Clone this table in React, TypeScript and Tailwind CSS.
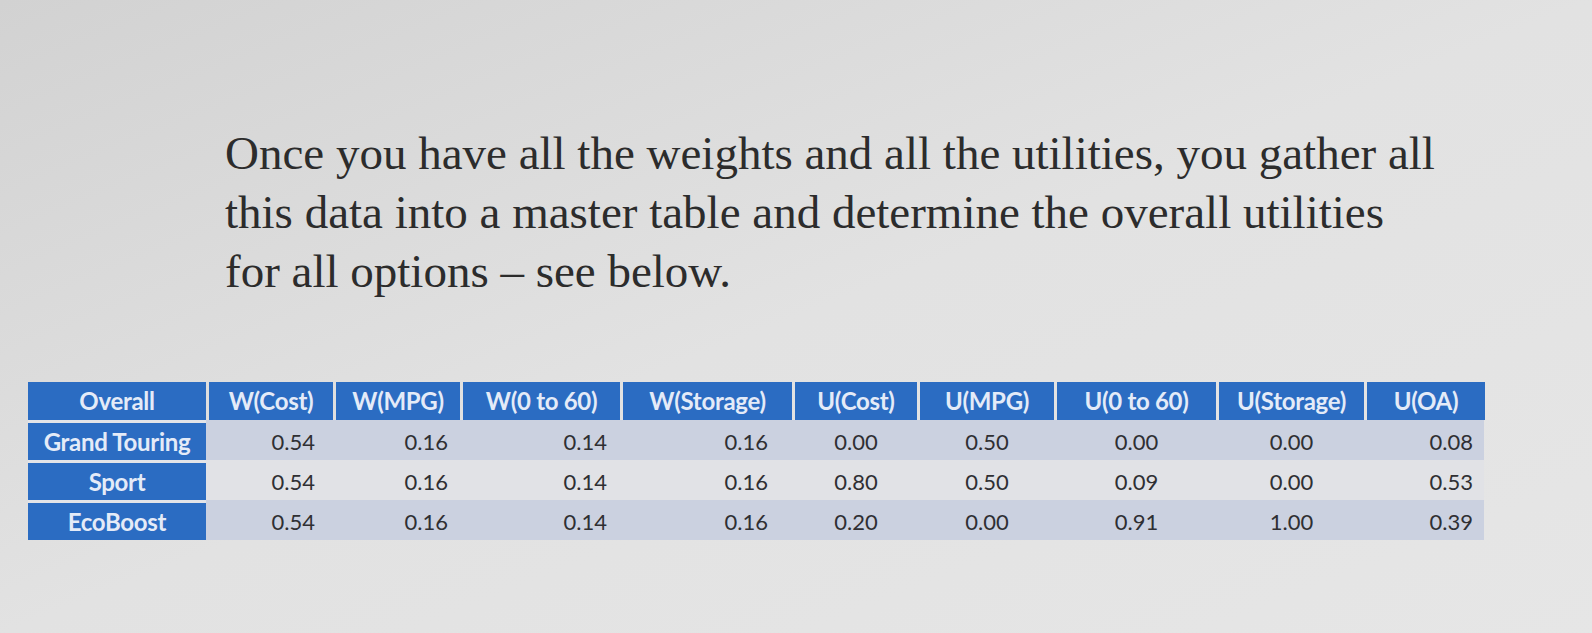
const columns = [
  { label: "Overall", align: "justify-center" },
  { label: "W(Cost)", align: "justify-end pr-[18px]" },
  { label: "W(MPG)", align: "justify-end pr-[12px]" },
  { label: "W(0 to 60)", align: "justify-end pr-[13px]" },
  { label: "W(Storage)", align: "justify-end pr-[24px]" },
  { label: "U(Cost)", align: "justify-center" },
  { label: "U(MPG)", align: "justify-center" },
  { label: "U(0 to 60)", align: "justify-center" },
  { label: "U(Storage)", align: "justify-center" },
  { label: "U(OA)", align: "justify-end pr-[12px]" },
];

const rows = [
  { name: "Grand Touring", values: ["0.54", "0.16", "0.14", "0.16", "0.00", "0.50", "0.00", "0.00", "0.08"], banded: true },
  { name: "Sport", values: ["0.54", "0.16", "0.14", "0.16", "0.80", "0.50", "0.09", "0.00", "0.53"], banded: false },
  { name: "EcoBoost", values: ["0.54", "0.16", "0.14", "0.16", "0.20", "0.00", "0.91", "1.00", "0.39"], banded: true },
];

const grid =
  "grid grid-cols-[178px_124px_124px_157px_169px_122px_134px_159px_145px_118px] gap-x-[3px]";

export default function App() {
  return (
    <div className="h-[633px] w-full overflow-hidden bg-gradient-to-br from-[#d2d2d2] via-[#e2e2e2] to-[#e6e6e6]">
      <div className="pl-[225px] pt-[124px] font-['Liberation_Serif',serif] text-[47px] leading-[59px] text-[#2c2c2c]">
        <p className="whitespace-nowrap">Once you have all the weights and all the utilities, you gather all</p>
        <p className="whitespace-nowrap">this data into a master table and determine the overall utilities</p>
        <p className="whitespace-nowrap">for all options – see below.</p>
      </div>

      <div className="ml-[28px] mt-[81px] w-[1456px] font-['Lato',sans-serif]">
        <div className={grid}>
          {columns.map((c) => (
            <div
              key={c.label}
              className="flex h-[38px] items-center justify-center bg-[#2b6cc2] text-[24px] font-bold tracking-[-0.3px] text-[#e4ebf8]"
            >
              {c.label}
            </div>
          ))}
        </div>

        {rows.map((r) => (
          <div
            key={r.name}
            className={`${grid} ${r.banded ? "bg-[#cbd1e0]" : "bg-[#e1e2e6]"}`}
          >
            <div className="flex h-[40px] items-center justify-center border-t-[3px] border-[#e3e4e8] bg-[#2b6cc2] text-[24px] font-bold tracking-[-0.3px] text-[#e4ebf8]">
              {r.name}
            </div>
            {r.values.map((v, i) => (
              <div
                key={i}
                className={`flex h-[40px] items-center pt-[3px] text-[22px] text-[#2f2f33] ${columns[i + 1].align}`}
              >
                {v}
              </div>
            ))}
          </div>
        ))}
      </div>
    </div>
  );
}
